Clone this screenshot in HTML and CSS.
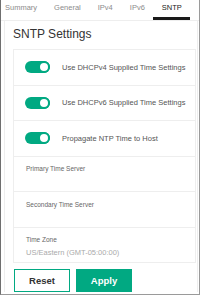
FILE: index.html
```html
<!DOCTYPE html>
<html lang="en">
<head>
<meta charset="utf-8">
<meta name="viewport" content="width=device-width,initial-scale=1">
<title>SNTP Settings</title>
<link rel="stylesheet" href="styles.css">
</head>
<body>

<div class="screen">
  <div class="tabs">
    <span class="tab first">Summary</span>
    <span class="tab">General</span>
    <span class="tab">IPv4</span>
    <span class="tab">IPv6</span>
    <span class="tab active">SNTP</span>
  </div>

  <div class="panel">
    <h2 class="panel-title">SNTP Settings</h2>

    <div class="card">
      <div class="row toggle-row">
        <span class="switch on"></span>
        <span class="switch-label">Use DHCPv4 Supplied Time Settings</span>
      </div>
      <div class="row toggle-row">
        <span class="switch on"></span>
        <span class="switch-label">Use DHCPv6 Supplied Time Settings</span>
      </div>
      <div class="row toggle-row">
        <span class="switch on"></span>
        <span class="switch-label">Propagate NTP Time to Host</span>
      </div>
      <div class="row field-row">
        <div class="field-label">Primary Time Server</div>
      </div>
      <div class="row field-row">
        <div class="field-label">Secondary Time Server</div>
      </div>
      <div class="row field-row">
        <div class="field-label">Time Zone</div>
        <div class="field-value">US/Eastern (GMT-05:00:00)</div>
      </div>
    </div>

    <div class="actions">
      <button class="btn btn-outline">Reset</button>
      <button class="btn btn-primary">Apply</button>
    </div>
  </div>
</div>

</body>
</html>
```

FILE: styles.css
```css
body{margin:0;background:#fff;font-family:"Liberation Sans",Arial,sans-serif;}
.screen{width:200px;height:295px;box-sizing:border-box;border-left:1px solid #6f6f6f;border-right:1px solid #9a9a9a;border-bottom:1px solid #9a9a9a;overflow:hidden;}

/* tabs */
.tabs{display:flex;height:20px;border-bottom:1px solid #eee;}
.tab{height:20px;box-sizing:border-box;padding:3px 8.5px 0;font-size:7.5px;line-height:9px;color:#8c8c8c;white-space:nowrap;}
.tab.first{padding-left:4px;}
.tab.active{color:#222;border-bottom:3px solid #1a1a1a;}

/* panel */
.panel{margin:0 1px 0 3px;border-left:1px solid #eee;border-right:1px solid #eee;padding:0 1px 0 8px;}
.panel-title{margin:0 0 7px;padding-top:5px;font-size:12px;line-height:16px;font-weight:normal;color:#333;}

.card{border:1px solid #eee;}
.row{height:35.5px;box-sizing:border-box;border-bottom:1px solid #eee;}
.row:last-child{border-bottom:none;height:34px;}

.toggle-row{display:flex;align-items:center;padding-left:11px;}
.switch{position:relative;width:25px;height:12px;border-radius:6px;background:#01a982;flex:none;}
.switch::after{content:"";position:absolute;right:0;top:0;width:12px;height:12px;box-sizing:border-box;border:2px solid #01a982;border-radius:50%;background:#fff;}
.switch-label{margin-left:12px;font-size:7.5px;color:#555;white-space:nowrap;}

.field-row{padding:7.5px 0 0 12px;}
.field-label{font-size:6.5px;line-height:9px;color:#666;}
.field-value{margin-top:4px;font-size:7.5px;line-height:10px;color:#aaa;}

/* buttons */
.actions{display:flex;gap:6px;margin:6px 0 0 1px;}
.btn{width:56px;height:23px;box-sizing:border-box;font-family:inherit;font-size:9.5px;font-weight:bold;border:1px solid #01a982;padding:0;}
.btn-outline{background:#fff;color:#333;}
.btn-primary{background:#01a982;color:#fff;}
```
